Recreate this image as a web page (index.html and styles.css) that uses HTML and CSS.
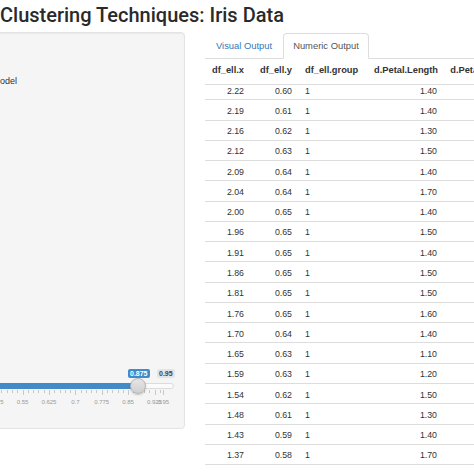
FILE: index.html
```html
<!DOCTYPE html>
<html>
<head>
<meta charset="utf-8">
<link rel="stylesheet" href="styles.css">
</head>
<body>
<h1 class="title">Clustering Techniques: Iris Data</h1>
<div class="layout">
  <aside class="sidebar">
    <div class="field-label">odel</div>
    <div class="slider">
      <div class="track"></div>
      <div class="bar"></div>
      <div class="ticks">
        <span class="tick minor" style="left:0.8px"></span>
        <span class="tick major" style="left:6.1px"></span>
        <span class="tick minor" style="left:11.4px"></span>
        <span class="tick minor" style="left:16.7px"></span>
        <span class="tick minor" style="left:21.9px"></span>
        <span class="tick minor" style="left:27.2px"></span>
        <span class="tick major" style="left:32.5px"></span>
        <span class="tick minor" style="left:37.8px"></span>
        <span class="tick minor" style="left:43.1px"></span>
        <span class="tick minor" style="left:48.3px"></span>
        <span class="tick minor" style="left:53.6px"></span>
        <span class="tick major" style="left:58.9px"></span>
        <span class="tick minor" style="left:64.2px"></span>
        <span class="tick minor" style="left:69.5px"></span>
        <span class="tick minor" style="left:74.7px"></span>
        <span class="tick minor" style="left:80px"></span>
        <span class="tick major" style="left:85.3px"></span>
        <span class="tick minor" style="left:90.6px"></span>
        <span class="tick minor" style="left:95.9px"></span>
        <span class="tick minor" style="left:101.1px"></span>
        <span class="tick minor" style="left:106.4px"></span>
        <span class="tick major" style="left:111.7px"></span>
        <span class="tick minor" style="left:117px"></span>
        <span class="tick minor" style="left:122.3px"></span>
        <span class="tick minor" style="left:127.5px"></span>
        <span class="tick minor" style="left:132.8px"></span>
        <span class="tick major" style="left:138.1px"></span>
        <span class="tick minor" style="left:143.4px"></span>
        <span class="tick minor" style="left:148.7px"></span>
        <span class="tick minor" style="left:153.9px"></span>
        <span class="tick minor" style="left:159.2px"></span>
        <span class="tick major" style="left:164.5px"></span>
        <span class="tick minor" style="left:169.8px"></span>
        <span class="tick major" style="left:173.3px"></span>
        <span class="grid-label" style="left:6.1px">0.475</span>
        <span class="grid-label" style="left:32.5px">0.55</span>
        <span class="grid-label" style="left:58.9px">0.625</span>
        <span class="grid-label" style="left:85.3px">0.7</span>
        <span class="grid-label" style="left:111.7px">0.775</span>
        <span class="grid-label" style="left:138.1px">0.85</span>
        <span class="grid-label" style="left:164.5px">0.925</span>
        <span class="grid-label" style="left:173.3px">0.95</span>
      </div>
      <div class="handle"></div>
      <span class="tag tag-from">0.875</span>
      <span class="tag tag-max">0.95</span>
    </div>
  </aside>
  <main class="main">
    <ul class="tabs">
      <li class="tab"><a class="tab-link">Visual Output</a></li>
      <li class="tab active"><a class="tab-link">Numeric Output</a></li>
    </ul>
    <table class="data">
      <colgroup>
        <col class="c1"><col class="c2"><col class="c3"><col class="c4"><col class="c5">
      </colgroup>
      <thead>
        <tr><th class="num">df_ell.x</th><th class="num">df_ell.y</th><th class="txt">df_ell.group</th><th class="num">d.Petal.Length</th><th class="num">d.Petal.Width</th></tr>
      </thead>
      <tbody>
        <tr class="first"><td class="num">2.22</td><td class="num">0.60</td><td class="txt">1</td><td class="num">1.40</td><td class="num">0.20</td></tr>
        <tr><td class="num">2.19</td><td class="num">0.61</td><td class="txt">1</td><td class="num">1.40</td><td class="num">0.20</td></tr>
        <tr><td class="num">2.16</td><td class="num">0.62</td><td class="txt">1</td><td class="num">1.30</td><td class="num">0.20</td></tr>
        <tr><td class="num">2.12</td><td class="num">0.63</td><td class="txt">1</td><td class="num">1.50</td><td class="num">0.20</td></tr>
        <tr><td class="num">2.09</td><td class="num">0.64</td><td class="txt">1</td><td class="num">1.40</td><td class="num">0.20</td></tr>
        <tr><td class="num">2.04</td><td class="num">0.64</td><td class="txt">1</td><td class="num">1.70</td><td class="num">0.40</td></tr>
        <tr><td class="num">2.00</td><td class="num">0.65</td><td class="txt">1</td><td class="num">1.40</td><td class="num">0.30</td></tr>
        <tr><td class="num">1.96</td><td class="num">0.65</td><td class="txt">1</td><td class="num">1.50</td><td class="num">0.20</td></tr>
        <tr><td class="num">1.91</td><td class="num">0.65</td><td class="txt">1</td><td class="num">1.40</td><td class="num">0.20</td></tr>
        <tr><td class="num">1.86</td><td class="num">0.65</td><td class="txt">1</td><td class="num">1.50</td><td class="num">0.10</td></tr>
        <tr><td class="num">1.81</td><td class="num">0.65</td><td class="txt">1</td><td class="num">1.50</td><td class="num">0.20</td></tr>
        <tr><td class="num">1.76</td><td class="num">0.65</td><td class="txt">1</td><td class="num">1.60</td><td class="num">0.20</td></tr>
        <tr><td class="num">1.70</td><td class="num">0.64</td><td class="txt">1</td><td class="num">1.40</td><td class="num">0.10</td></tr>
        <tr><td class="num">1.65</td><td class="num">0.63</td><td class="txt">1</td><td class="num">1.10</td><td class="num">0.10</td></tr>
        <tr><td class="num">1.59</td><td class="num">0.63</td><td class="txt">1</td><td class="num">1.20</td><td class="num">0.20</td></tr>
        <tr><td class="num">1.54</td><td class="num">0.62</td><td class="txt">1</td><td class="num">1.50</td><td class="num">0.40</td></tr>
        <tr><td class="num">1.48</td><td class="num">0.61</td><td class="txt">1</td><td class="num">1.30</td><td class="num">0.40</td></tr>
        <tr><td class="num">1.43</td><td class="num">0.59</td><td class="txt">1</td><td class="num">1.40</td><td class="num">0.30</td></tr>
        <tr><td class="num">1.37</td><td class="num">0.58</td><td class="txt">1</td><td class="num">1.70</td><td class="num">0.30</td></tr>
      </tbody>
    </table>
  </main>
</div>
</body>
</html>
```
FILE: styles.css
```css
html, body {
  margin: 0;
  padding: 0;
  width: 474px;
  height: 474px;
  overflow: hidden;
  background: #fff;
  font-family: "Liberation Sans", Arial, sans-serif;
  color: #333;
}

.title {
  margin: 3px 0 5px 0;
  font-family: Roboto, "Liberation Sans", sans-serif;
  font-weight: 500;
  font-size: 20px;
  line-height: 24px;
  color: #2a2a2a;
  white-space: nowrap;
}

.layout {
  display: grid;
  grid-template-columns: 195px 269px;
  column-gap: 20px;
  margin-left: -10px;
  align-items: start;
}

/* sidebar well */
.sidebar {
  box-sizing: border-box;
  height: 397px;
  background: #f5f5f5;
  border: 1px solid #e3e3e3;
  border-radius: 4px;
  box-shadow: inset 0 1px 1px rgba(0,0,0,0.05);
  display: flex;
  flex-direction: column;
  padding: 0 0 18px 0;
}

.field-label {
  margin-top: 42px;
  padding-left: 9px;
  font-size: 9px;
  line-height: 12px;
  color: #333;
}

.slider {
  margin-top: auto;
  position: relative;
  height: 45px;
  margin-left: -1px;
}

.track {
  position: absolute;
  left: 0;
  top: 18px;
  width: 182px;
  height: 4px;
  background: #fbfbfb;
  border: 1px solid #dcdcdc;
  border-radius: 3px;
  box-sizing: content-box;
}

.bar {
  position: absolute;
  left: 0;
  top: 18px;
  width: 148px;
  height: 6px;
  background: #428bca;
}

.handle {
  position: absolute;
  left: 140px;
  top: 13px;
  width: 14px;
  height: 14px;
  border-radius: 50%;
  background: linear-gradient(#e6e6e6, #cfcfcf);
  border: 1px solid #b5b5b5;
  box-shadow: 0 1px 2px rgba(0,0,0,0.2);
}

.tag {
  position: absolute;
  top: 4px;
  height: 9px;
  font-size: 7px;
  line-height: 9px;
  padding: 0 2px;
  border-radius: 2px;
  font-weight: bold;
}

.tag-from {
  left: 138px;
  background: #428bca;
  color: #fff;
}

.tag-max {
  left: 167px;
  background: #e1e4e9;
  color: #444;
}

.ticks {
  position: absolute;
  left: 0;
  top: 25px;
  width: 190px;
  height: 20px;
}

.tick {
  position: absolute;
  top: 0;
  width: 1px;
  background: #c8c8c8;
}

.tick.major { height: 5px; }
.tick.minor { height: 3px; }

.grid-label {
  position: absolute;
  top: 8px;
  transform: translateX(-50%);
  font-size: 6px;
  line-height: 8px;
  color: #999;
  white-space: nowrap;
}

/* main area */
.main {
  overflow: hidden;
  height: 442px;
}

.tabs {
  list-style: none;
  margin: 1px 0 0 0;
  padding: 0 0 0 1px;
  display: flex;
  border-bottom: 1px solid #ddd;
  height: 25px;
}

.tab {
  margin-right: 1px;
  margin-bottom: -1px;
}

.tab-link {
  display: block;
  box-sizing: border-box;
  height: 26px;
  padding: 0 9px;
  font-size: 9.4px;
  line-height: 24px;
  color: #337ab7;
  border: 1px solid transparent;
  border-radius: 4px 4px 0 0;
  white-space: nowrap;
}

.tab.active .tab-link {
  color: #555;
  background: #fff;
  border-color: #ddd;
  border-bottom-color: #fff;
}

.data {
  border-collapse: separate;
  border-spacing: 0;
  table-layout: fixed;
  width: 310px;
}

.c1 { width: 45px; }
.c2 { width: 48px; }
.c3 { width: 70px; }
.c4 { width: 75px; }
.c5 { width: 72px; }

.data th {
  box-sizing: border-box;
  height: 26px;
  padding: 5px 6px 8px 6px;
  font-size: 9.3px;
  line-height: 12px;
  font-weight: bold;
  color: #333;
  border-bottom: 1px solid #ddd;
  white-space: nowrap;
  vertical-align: top;
}

.data td {
  box-sizing: border-box;
  height: 20.28px;
  padding: 2px 6px 0 6px;
  font-size: 8.8px;
  line-height: 12px;
  color: #333;
  border-bottom: 1px solid #ddd;
  white-space: nowrap;
  vertical-align: middle;
}

.data tr.first td {
  height: 15.28px;
  padding-top: 0;
  vertical-align: top;
}

.num { text-align: right; }
.txt { text-align: left; }
.data th.txt, .data td.txt { padding-left: 7px; }
```
